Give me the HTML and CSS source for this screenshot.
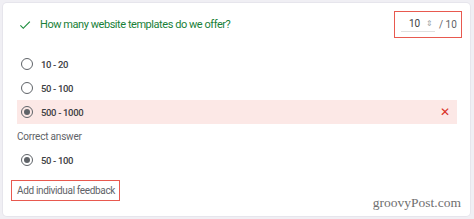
FILE: index.html
```html
<!DOCTYPE html>
<html lang="en">
<head>
    <meta charset="UTF-8">
    <title>Quiz question</title>
    <link rel="stylesheet" href="styles.css">
</head>
<body>

    <div class="card">
        <div class="q-head">
            <div class="q-title">
                <svg class="check" width="14" height="14" viewBox="0 0 24 24"><path d="M9 16.2L4.8 12l-1.4 1.4L9 19 21 7l-1.4-1.4L9 16.2z" fill="#1e8e3e"/></svg>
                <span>How many website templates do we offer?</span>
            </div>
            <div class="points hl">
                <span class="pts-input">10<span class="spin">&#8661;</span></span>
                <span class="pts-total">/ 10</span>
            </div>
        </div>

        <div class="options">
            <div class="opt"><span class="radio"></span>10 - 20</div>
            <div class="opt"><span class="radio"></span>50 - 100</div>
            <div class="opt wrong"><span class="radio on"></span>500 - 1000<span class="x">&#10005;</span></div>
        </div>

        <p class="label">Correct answer</p>
        <div class="opt"><span class="radio on"></span>50 - 100</div>

        <div class="feedback hl">Add individual feedback</div>

        <div class="mark">groovyPost.com</div>
    </div>

</body>
</html>
```

FILE: styles.css
```css
body { margin: 0; background: #f0eff4; font-family: Roboto, "Liberation Sans", sans-serif; }

.card { position: relative; background: #fff; margin: 3px 4px 3px 3px; height: 213px; box-sizing: border-box; border-radius: 4px; box-shadow: 0 0 0 1px #e6e5ec; padding: 8px 8px 0 14px; }

/* header: question + points */
.q-head { display: flex; align-items: center; justify-content: space-between; }
.q-title { display: flex; align-items: center; gap: 8px; color: #188038; font-size: 11px; letter-spacing: -0.45px; padding-left: 1px; }
.check { flex: none; }

.hl { border: 1.5px solid #e8594f; box-sizing: border-box; }

.points { display: flex; align-items: center; flex: none; white-space: nowrap; height: 27px; width: 68px; padding-left: 6px; font-size: 10px; color: #5f6368; }
.pts-input { display: flex; align-items: center; justify-content: space-between; flex: none; width: 34px; padding: 0 2px 2px 8px; border-bottom: 1px solid #e0e0e0; color: #3c4043; box-sizing: border-box; margin-right: 4px; }
.spin { font-size: 8px; color: #9aa0a6; }

/* options */
.options { margin-top: 14px; }
.opt { display: flex; align-items: center; gap: 8px; height: 24px; padding-left: 4px; font-size: 9.5px; letter-spacing: -0.35px; font-weight: 500; color: #3c4043; }
.opt.wrong { background: #fce8e6; margin-right: 5px; }
.x { margin-left: auto; margin-right: 7px; color: #d93025; font-size: 12px; font-weight: 400; }

.radio { flex: none; width: 12px; height: 12px; border: 1.5px solid #5f6368; border-radius: 50%; box-sizing: border-box; display: flex; align-items: center; justify-content: center; }
.radio.on::after { content: ""; width: 6px; height: 6px; border-radius: 50%; background: #5f6368; }

.label { margin: 6px 0 4px 0; font-size: 10px; letter-spacing: -0.2px; color: #5f6368; line-height: 14px; }

.feedback { display: inline-block; margin: 8px 0 0 -6px; padding: 0 4px 0 5px; height: 21px; line-height: 19px; font-size: 10px; letter-spacing: -0.35px; color: #5f6368; }

.mark { position: absolute; right: 9px; bottom: 5px; font-family: "Liberation Serif", serif; font-size: 13.5px; color: #6f6f6f; }
```
